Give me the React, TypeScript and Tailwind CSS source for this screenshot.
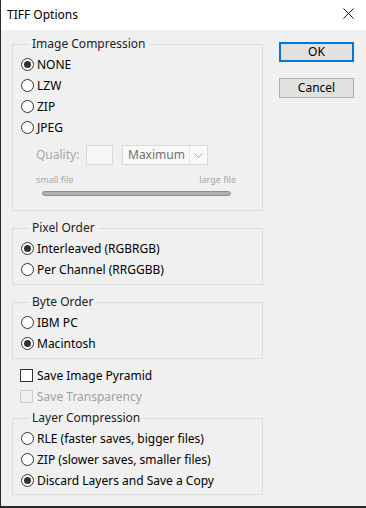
import React from "react";

function Radio({ checked, label }: { checked?: boolean; label: string }) {
  return (
    <div className="flex h-[21px] items-center gap-[3px]">
      <span className="flex h-[13px] w-[13px] items-center justify-center rounded-full border border-[#333333] bg-white">
        {checked && <span className="h-[7px] w-[7px] rounded-full bg-[#333333]" />}
      </span>
      <span className="text-[12px] text-black">{label}</span>
    </div>
  );
}

function Check({ label, disabled }: { label: string; disabled?: boolean }) {
  return (
    <div className="flex h-[21px] items-center gap-[4px]">
      <span
        className={
          disabled
            ? "h-[13px] w-[13px] border border-[#cccccc] bg-[#f0f0f0]"
            : "h-[13px] w-[13px] border border-[#333333] bg-white"
        }
      />
      <span className={disabled ? "text-[12px] text-[#a0a0a0]" : "text-[12px] text-black"}>{label}</span>
    </div>
  );
}

function Group({ title, className, children }: { title: string; className?: string; children: React.ReactNode }) {
  return (
    <fieldset className={"border border-[#dcdcdc] px-0 " + (className ?? "")}>
      <legend className="ml-[16px] px-[3px] text-[12px] leading-[16px] text-[#222222]">{title}</legend>
      {children}
    </fieldset>
  );
}

export default function App() {
  return (
    <div
      className="flex h-[508px] w-[366px] flex-col border-b-2 border-l border-[#2a2a2a] bg-[#f0f0f0]"
      style={{ fontFamily: '"Noto Sans", "Open Sans", sans-serif' }}
    >
      <div className="flex h-[30px] shrink-0 items-center justify-between bg-white pl-[6px] pr-[12px]">
        <span className="text-[12px] text-black">TIFF Options</span>
        <svg width="11" height="11" viewBox="0 0 11 11" className="mb-[4px]">
          <path d="M0.5 0.5 L10.5 10.5 M10.5 0.5 L0.5 10.5" stroke="#111" strokeWidth="1" />
        </svg>
      </div>

      <div className="flex pl-[11px]">
        <div className="flex w-[251px] flex-col">
          <Group title="Image Compression" className="mt-[6px]">
            <div className="flex flex-col pb-[14px] pl-[8px] pt-[2px]">
              <Radio checked label="NONE" />
              <Radio label="LZW" />
              <Radio label="ZIP" />
              <Radio label="JPEG" />
              <div className="ml-[15px] mt-[7px] flex h-[20px] items-center">
                <span className="w-[50px] text-[12px] text-[#a8a8a8]">Quality:</span>
                <span className="h-[20px] w-[27px] border border-[#d9d9d9] bg-[#f7f7f7]" />
                <div className="ml-[9px] flex h-[20px] w-[86px] items-center border border-[#d9d9d9] bg-[#f9f9f9]">
                  <span className="w-[66px] pl-[5px] text-[12px] text-[#707070]">Maximum</span>
                  <span className="flex h-full flex-1 items-center justify-center border-l border-[#e4e4e4]">
                    <svg width="9" height="5" viewBox="0 0 9 5">
                      <path d="M0.5 0.5 L4.5 4.5 L8.5 0.5" stroke="#a8a8a8" fill="none" />
                    </svg>
                  </span>
                </div>
              </div>
              <div className="ml-[15px] mr-[26px] mt-[8px] flex h-[14px] items-center justify-between text-[9px] text-[#a8a8a8]">
                <span>small file</span>
                <span>large file</span>
              </div>
              <div className="ml-[21px] mr-[31px] mt-[4px] h-[5px] rounded-full border border-[#8e8e8e] bg-[#b0b0b0]" />
            </div>
          </Group>

          <Group title="Pixel Order" className="mt-[9px]">
            <div className="flex flex-col pb-[4px] pl-[8px] pt-[2px]">
              <Radio checked label="Interleaved (RGBRGB)" />
              <Radio label="Per Channel (RRGGBB)" />
            </div>
          </Group>

          <Group title="Byte Order" className="mt-[9px]">
            <div className="flex flex-col pb-[4px] pl-[8px] pt-[2px]">
              <Radio label="IBM PC" />
              <Radio checked label="Macintosh" />
            </div>
          </Group>

          <div className="mt-[6px] flex flex-col pl-[8px]">
            <Check label="Save Image Pyramid" />
            <Check disabled label="Save Transparency" />
          </div>

          <Group title="Layer Compression" className="mt-[3px]">
            <div className="flex flex-col pb-[3px] pl-[8px] pt-[2px]">
              <Radio label="RLE (faster saves, bigger files)" />
              <Radio label="ZIP (slower saves, smaller files)" />
              <Radio checked label="Discard Layers and Save a Copy" />
            </div>
          </Group>
        </div>

        <div className="ml-[16px] flex flex-col gap-[16px] pt-[12px]">
          <button className="flex h-[20px] w-[75px] items-center justify-center border-2 border-[#0078d7] bg-[#e1e1e1] text-[12px] text-black">
            OK
          </button>
          <button className="flex h-[20px] w-[75px] items-center justify-center border border-[#adadad] bg-[#e1e1e1] text-[12px] text-black">
            Cancel
          </button>
        </div>
      </div>
    </div>
  );
}
